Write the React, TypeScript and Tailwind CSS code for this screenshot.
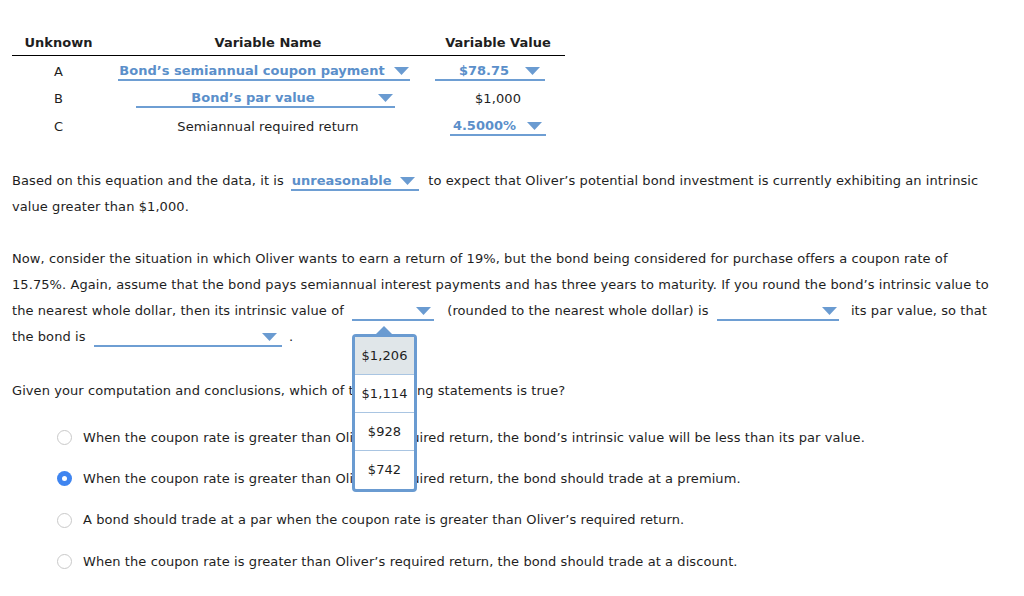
import React from "react";

function Arrow() {
  return (
    <svg width="15" height="8" viewBox="0 0 15 8" className="shrink-0">
      <path d="M0 0H15L7.5 8Z" fill="#6a9bd1" />
    </svg>
  );
}

function Drop({ w, text, pl = "pl-0", pr = "pr-[2px]" }: { w: string; text?: string; pl?: string; pr?: string }) {
  return (
    <span className={`inline-flex items-center gap-[8px] align-baseline border-b-2 border-[#6e9ed3] leading-[16px] tracking-normal ${w} ${pl} ${pr}`}>
      <span className="flex-1 text-center font-bold text-[#5b8fca] whitespace-nowrap">{text ?? "\u00a0"}</span>
      <Arrow />
    </span>
  );
}

function Radio({ checked }: { checked?: boolean }) {
  if (checked)
    return (
      <span className="w-[15px] h-[15px] rounded-full bg-[#3f85f0] flex items-center justify-center shrink-0">
        <span className="w-[5px] h-[5px] rounded-full bg-white" />
      </span>
    );
  return <span className="w-[15px] h-[15px] rounded-full border border-[#c9c9c9] bg-white shrink-0" />;
}

export default function App() {
  const options = [
    { t: "When the coupon rate is greater than Oliver\u2019s required return, the bond\u2019s intrinsic value will be less than its par value." },
    { t: "When the coupon rate is greater than Oliver\u2019s required return, the bond should trade at a premium.", c: true },
    { t: "A bond should trade at a par when the coupon rate is greater than Oliver\u2019s required return." },
    { t: "When the coupon rate is greater than Oliver\u2019s required return, the bond should trade at a discount." },
  ];
  return (
    <div className="relative w-[1024px] h-[596px] bg-white text-[13px] tracking-[0.08px] text-[#1e1e1e] overflow-hidden" style={{ fontFamily: '"DejaVu Sans", Verdana, sans-serif' }}>
      <div className="pt-[30px] pl-[12px]">
        <div className="grid grid-cols-[93px_326px_134px]">
          <div className="h-[26px] flex items-center justify-center font-bold tracking-normal border-b border-black">Unknown</div>
          <div className="h-[26px] flex items-center justify-center font-bold tracking-normal border-b border-black">Variable Name</div>
          <div className="h-[26px] flex items-center justify-center font-bold tracking-normal border-b border-black">Variable Value</div>

          <div className="h-[28px] pt-[3px] flex items-center justify-center">A</div>
          <div className="h-[28px] pt-[3px] flex items-center pl-[13px]">
            <Drop w="w-[292px]" text={"Bond\u2019s semiannual coupon payment"} pr="pr-[1px]" />
          </div>
          <div className="h-[28px] pt-[3px] flex items-center pl-[4px]">
            <Drop w="w-[110px]" text="$78.75" pl="pl-[16px]" pr="pr-[5px]" />
          </div>

          <div className="h-[28px] pt-[2px] flex items-center justify-center">B</div>
          <div className="h-[28px] pt-[2px] flex items-center pl-[31px]">
            <Drop w="w-[259px]" text={"Bond\u2019s par value"} pr="pr-[2px]" />
          </div>
          <div className="h-[28px] pt-[2px] flex items-center justify-center">$1,000</div>

          <div className="h-[28px] pt-[2px] flex items-center justify-center">C</div>
          <div className="h-[28px] pt-[2px] flex items-center justify-center">Semiannual required return</div>
          <div className="h-[28px] pt-[2px] flex items-center pl-[19px]">
            <Drop w="w-[96px]" text="4.5000%" pr="pr-[4px]" />
          </div>
        </div>
      </div>

      <div className="pl-[12px] leading-[26px] whitespace-nowrap">
        <p className="mt-[28px]">
          Based on this equation and the data, it is{" "}
          <span className="ml-[3px]"><Drop w="w-[128px]" text="unreasonable" pr="pr-[4px]" /></span>
          <span className="ml-[5px]"> to expect that Oliver’s potential bond investment is currently exhibiting an intrinsic</span>
          <br />
          value greater than $1,000.
        </p>
        <p className="mt-[26px]">
          Now, consider the situation in which Oliver wants to earn a return of 19%, but the bond being considered for purchase offers a coupon rate of
          <br />
          15.75%. Again, assume that the bond pays semiannual interest payments and has three years to maturity. If you round the bond’s intrinsic value to
          <br />
          the nearest whole dollar, then its intrinsic value of{" "}
          <span className="ml-[4px]"><Drop w="w-[82px]" pr="pr-[3px]" /></span>
          <span className="ml-[9px]"> (rounded to the nearest whole dollar) is </span>
          <span className="ml-[4px]"><Drop w="w-[122px]" pr="pr-[2px]" /></span>
          <span className="ml-[8px]"> its par value, so that</span>
          <br />
          the bond is{" "}
          <span className="ml-[4px]"><Drop w="w-[188px]" pr="pr-[5px]" /></span>
          <span className="ml-[3px]"> .</span>
        </p>
        <p className="mt-[28px]">Given your computation and conclusions, which of the following statements is true?</p>
        <div className="mt-[13px] pl-[45px]">
          {options.map((o, i) => (
            <div key={i} className="h-[41.3px] flex items-center gap-[11px]">
              <Radio checked={o.c} />
              <span>{o.t}</span>
            </div>
          ))}
        </div>
      </div>

      <div className="absolute left-[352px] top-[334px] w-[65px]">
        <svg width="18" height="9" viewBox="0 0 18 9" className="absolute left-[23px] top-[-8px]">
          <path d="M0 9L9 0L18 9Z" fill="#6a9bd1" />
        </svg>
        <div className="border-[3px] border-[#6a9bd1] rounded-[4px] bg-white overflow-hidden">
          <div className="h-[38px] flex items-center justify-center bg-[#e0e6e9] border-b border-[#a9c5e2]">$1,206</div>
          <div className="h-[38px] flex items-center justify-center border-b border-[#a9c5e2]">$1,114</div>
          <div className="h-[38px] flex items-center justify-center border-b border-[#a9c5e2]">$928</div>
          <div className="h-[38px] flex items-center justify-center">$742</div>
        </div>
      </div>
    </div>
  );
}
